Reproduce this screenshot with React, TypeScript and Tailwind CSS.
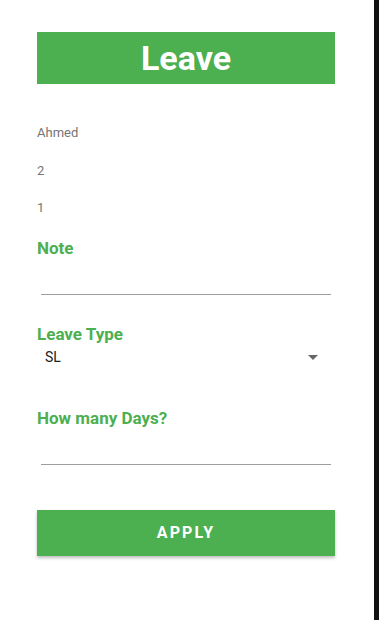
export default function App() {
  return (
    <div className="flex h-[620px] w-[379px] font-['Roboto','Liberation_Sans',sans-serif]">
      <div className="flex w-[374px] shrink-0 flex-col bg-white pl-[37px] pr-[39px] pt-[32px]">
        <div className="flex h-[52px] items-center justify-center bg-[#4caf50]">
          <span className="text-[34px] font-bold leading-none text-white">Leave</span>
        </div>

        <p className="mt-[39px] h-[20px] text-[13px] leading-[20px] text-[#757575]">Ahmed</p>
        <p className="mt-[18px] h-[20px] text-[13px] leading-[20px] text-[#757575]">2</p>
        <p className="mt-[17px] h-[20px] text-[13px] leading-[20px] text-[#757575]">1</p>

        <p className="mt-[19px] h-[22px] text-[17px] font-bold leading-[22px] text-[#4caf50]">Note</p>
        <div className="mx-[4px] h-[36px] border-b border-[#9e9e9e]" />

        <p className="mt-[28px] h-[22px] text-[17px] font-bold leading-[22px] text-[#4caf50]">Leave Type</p>
        <div className="mt-[2px] flex h-[20px] items-center justify-between pl-[8px] pr-[17px]">
          <span className="text-[14px] leading-[20px] text-[#212121]">SL</span>
          <svg width="10" height="5" viewBox="0 0 10 5">
            <path d="M0 0h10L5 5z" fill="#666" />
          </svg>
        </div>

        <p className="mt-[40px] h-[22px] text-[17px] font-bold leading-[22px] text-[#4caf50]">How many Days?</p>
        <div className="mx-[4px] h-[36px] border-b border-[#9e9e9e]" />

        <button
          type="button"
          className="mt-[45px] flex h-[46px] items-center justify-center bg-[#4caf50] shadow-[0_2px_3px_rgba(0,0,0,0.25)]"
        >
          <span className="text-[16px] font-bold tracking-[0.13em] text-white">APPLY</span>
        </button>
      </div>
      <div className="flex-1 bg-[#111]" />
    </div>
  );
}
